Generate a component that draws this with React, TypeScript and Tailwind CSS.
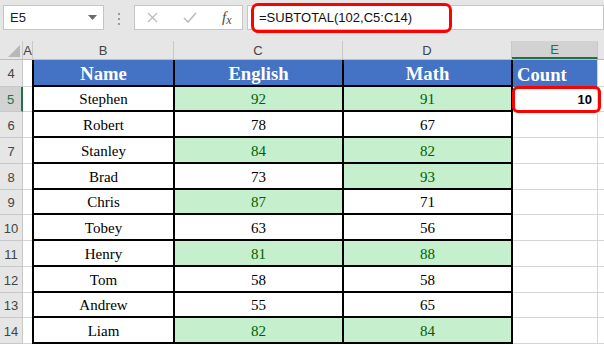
import React from "react";

type Row = {
  n: number;
  name: string;
  eng: number;
  math: number;
  engG: boolean;
  mathG: boolean;
  h: string;
};

const rows: Row[] = [
  { n: 5, name: "Stephen", eng: 92, math: 91, engG: true, mathG: true, h: "h-[25px]" },
  { n: 6, name: "Robert", eng: 78, math: 67, engG: false, mathG: false, h: "h-[26px]" },
  { n: 7, name: "Stanley", eng: 84, math: 82, engG: true, mathG: true, h: "h-[26px]" },
  { n: 8, name: "Brad", eng: 73, math: 93, engG: false, mathG: true, h: "h-[26px]" },
  { n: 9, name: "Chris", eng: 87, math: 71, engG: true, mathG: false, h: "h-[25px]" },
  { n: 10, name: "Tobey", eng: 63, math: 56, engG: false, mathG: false, h: "h-[26px]" },
  { n: 11, name: "Henry", eng: 81, math: 88, engG: true, mathG: true, h: "h-[26px]" },
  { n: 12, name: "Tom", eng: 58, math: 58, engG: false, mathG: false, h: "h-[26px]" },
  { n: 13, name: "Andrew", eng: 55, math: 65, engG: false, mathG: false, h: "h-[25px]" },
  { n: 14, name: "Liam", eng: 82, math: 84, engG: true, mathG: true, h: "h-[26px]" },
];

const serif = "font-['Liberation_Serif','Times_New_Roman',serif]";

const Toolbar = () => (
  <div className="h-[41px] bg-[#e6e6e6] flex items-start pt-[5px] pl-[3px]">
    {/* name box */}
    <div className="w-[101px] h-[25px] bg-white border border-[#c6c6c6] flex items-center justify-between pl-[6px] pr-[6px] text-[13px] text-[#222]">
      <span>E5</span>
      <svg width="9" height="5" viewBox="0 0 9 5">
        <polygon points="0,0 9,0 4.5,5" fill="#6a6a6a" />
      </svg>
    </div>
    {/* grip dots */}
    <div className="ml-[14px] mt-[8px] flex flex-col gap-[3px]">
      <div className="w-[2px] h-[2px] bg-[#9a9a9a]" />
      <div className="w-[2px] h-[2px] bg-[#9a9a9a]" />
      <div className="w-[2px] h-[2px] bg-[#9a9a9a]" />
    </div>
    {/* cancel / enter / fx */}
    <div className="ml-[14px] w-[109px] h-[25px] bg-white border border-[#c6c6c6] flex items-center">
      <svg className="ml-[12px]" width="11" height="11" viewBox="0 0 11 11">
        <path d="M1 1 L10 10 M10 1 L1 10" stroke="#bdbdbd" strokeWidth="1.4" />
      </svg>
      <svg className="ml-[25px]" width="14" height="11" viewBox="0 0 14 11">
        <path d="M1 6 L5 10 L13 1" stroke="#bdbdbd" strokeWidth="1.6" fill="none" />
      </svg>
      <span className={`ml-[25px] italic text-[15px] text-[#4a4a4a] ${serif}`}>
        f<span className="text-[12px] relative top-[2px]">x</span>
      </span>
    </div>
    {/* formula input */}
    <div className="ml-[4px] flex-1 h-[25px] bg-white border border-[#c6c6c6] relative flex items-center pl-[11px] text-[13px] text-[#111]">
      <span>=SUBTOTAL(102,C5:C14)</span>
      <div className="absolute left-[3px] top-[-3px] w-[201px] h-[30px] border-[3px] border-[#ff0000] rounded-[7px] pointer-events-none" />
    </div>
  </div>
);

const ColHeaders = () => (
  <div className="h-[19px] flex bg-[#e6e6e6] text-[13px] text-[#444] border-b border-[#bcbcbc]">
    <div className="w-[23px] border-r border-[#c8c8c8] relative">
      <svg className="absolute left-0 top-0" width="23" height="19" viewBox="0 0 23 19">
        <polygon points="20,4 20,16 8,16" fill="#b8b8b8" />
      </svg>
    </div>
    <div className="w-[10px] border-r border-[#c8c8c8] flex items-center justify-center pt-[1px]">A</div>
    <div className="w-[141px] border-r border-[#c8c8c8] flex items-center justify-center pt-[1px]">B</div>
    <div className="w-[169px] border-r border-[#c8c8c8] flex items-center justify-center pt-[1px]">C</div>
    <div className="w-[169px] border-r border-[#c8c8c8] flex items-center justify-center pt-[1px]">D</div>
    <div className="w-[86px] bg-[#d2d2d2] border-r border-[#c8c8c8] border-b-2 border-b-[#217346] flex items-center justify-center pt-[1px] text-[#217346]">
      E
    </div>
    <div className="flex-1" />
  </div>
);

const RowHead = ({ n, active }: { n: number; active?: boolean }) => (
  <div
    className={`w-[23px] h-full flex items-center justify-center pt-[2px] text-[13px] border-b border-[#c8c8c8] ${
      active
        ? "bg-[#d2d2d2] text-[#217346] border-r-2 border-r-[#217346]"
        : "bg-[#e6e6e6] text-[#444] border-r border-r-[#c8c8c8]"
    }`}
  >
    {n}
  </div>
);

const Cell = ({ v, green }: { v: number; green: boolean }) => (
  <div
    className={`w-[169px] h-full border-r-2 border-b-2 border-black flex items-center justify-center pt-[2px] text-[15px] ${
      green ? "bg-[#c6efce] text-[#006100]" : "bg-white text-black"
    }`}
  >
    {v}
  </div>
);

export default function App() {
  return (
    <div className="w-[604px] h-[345px] overflow-hidden bg-white font-['Liberation_Sans',Arial,sans-serif]">
      <Toolbar />
      <ColHeaders />

      {/* row 4: headers */}
      <div className="h-[27px] flex">
        <RowHead n={4} />
        <div className="w-[9px] h-full border-b border-[#d4d4d4]" />
        <div className={`flex h-full text-white font-bold text-[18.67px] ${serif}`}>
          <div className="w-[143px] bg-[#4472c4] border-l-2 border-r-2 border-b-2 border-black flex items-center justify-center pt-[2px]">
            Name
          </div>
          <div className="w-[169px] bg-[#4472c4] border-r-2 border-b-2 border-black flex items-center justify-center pt-[2px]">
            English
          </div>
          <div className="w-[169px] bg-[#4472c4] border-r-2 border-b-2 border-black flex items-center justify-center pt-[2px]">
            Math
          </div>
          <div className="w-[85px] bg-[#4472c4] border-r border-[#d4d4d4] flex items-center pl-[4px] pt-[2px]">
            Count
          </div>
        </div>
        <div className="flex-1 h-full border-b border-[#d4d4d4]" />
      </div>

      {rows.map((r) => (
        <div key={r.n} className={`${r.h} flex`}>
          <RowHead n={r.n} active={r.n === 5} />
          <div className="w-[9px] h-full border-b border-[#d4d4d4]" />
          <div className={`flex h-full ${serif}`}>
            <div className="w-[143px] h-full bg-white border-l-2 border-r-2 border-b-2 border-black flex items-center justify-center pt-[2px] text-[15px] text-black">
              {r.name}
            </div>
            <Cell v={r.eng} green={r.engG} />
            <Cell v={r.math} green={r.mathG} />
          </div>
          <div className="w-[85px] h-full border-r border-b border-[#d4d4d4] relative flex items-center justify-end pr-[5px] pt-[2px] text-[13px] font-bold text-black">
            {r.n === 5 && (
              <>
                <span>10</span>
                <div className="absolute left-[-1px] top-[-1px] w-[89px] h-[27px] border-[3px] border-[#ff0000] rounded-[6px] pointer-events-none" />
              </>
            )}
          </div>
          <div className="flex-1 h-full border-b border-[#d4d4d4]" />
        </div>
      ))}
    </div>
  );
}
